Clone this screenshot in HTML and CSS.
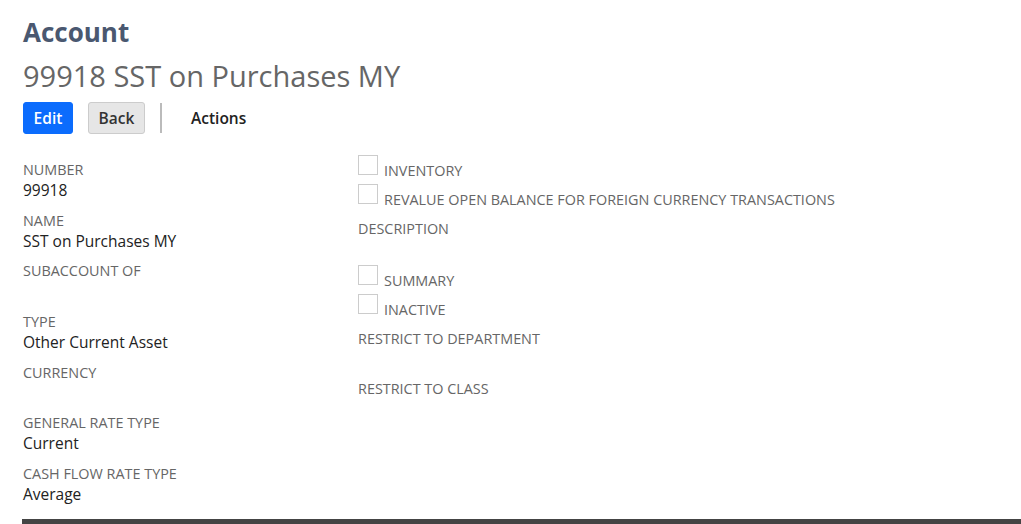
FILE: index.html
```html
<!DOCTYPE html>
<html>
<head>
<meta charset="utf-8">
<title>Account</title>
<link rel="stylesheet" href="styles.css">
</head>
<body>
<div class="page">
  <h1 class="title">Account</h1>
  <h2 class="subtitle">99918 SST on Purchases MY</h2>
  <div class="toolbar">
    <button class="btn btn-primary">Edit</button>
    <button class="btn btn-default">Back</button>
    <span class="sep"></span>
    <button class="btn btn-link">Actions</button>
  </div>
  <div class="fields">
    <div class="col">
      <div class="field"><div class="label">Number</div><div class="value">99918</div></div>
      <div class="field"><div class="label">Name</div><div class="value">SST on Purchases MY</div></div>
      <div class="field"><div class="label">Subaccount of</div><div class="value"></div></div>
      <div class="field"><div class="label">Type</div><div class="value">Other Current Asset</div></div>
      <div class="field"><div class="label">Currency</div><div class="value"></div></div>
      <div class="field"><div class="label">General rate type</div><div class="value">Current</div></div>
      <div class="field"><div class="label">Cash flow rate type</div><div class="value">Average</div></div>
    </div>
    <div class="col col-right">
      <div class="check"><span class="box"></span><span class="label">Inventory</span></div>
      <div class="check"><span class="box"></span><span class="label">Revalue open balance for foreign currency transactions</span></div>
      <div class="field field-wide"><div class="label">Description</div><div class="value"></div></div>
      <div class="check"><span class="box"></span><span class="label">Summary</span></div>
      <div class="check"><span class="box"></span><span class="label">Inactive</span></div>
      <div class="field field-tight"><div class="label">Restrict to department</div><div class="value"></div></div>
      <div class="field"><div class="label">Restrict to class</div><div class="value"></div></div>
    </div>
  </div>
  <div class="footer-bar"></div>
</div>
</body>
</html>
```

FILE: styles.css
```css
html, body {
  margin: 0;
  padding: 0;
  background: #ffffff;
  font-family: "Open Sans", "Noto Sans", sans-serif;
  overflow: hidden;
}

.page {
  padding: 15px 0 0 23px;
}

.title {
  margin: 0;
  font-size: 26px;
  line-height: 34px;
  font-weight: 700;
  color: #4a5870;
}

.subtitle {
  margin: 7px 0 0;
  font-size: 29px;
  line-height: 40px;
  font-weight: 400;
  color: #666666;
}

.toolbar {
  display: flex;
  align-items: center;
  margin-top: 6px;
  height: 32px;
}

.btn {
  font-family: inherit;
  font-size: 15.5px;
  font-weight: 600;
  height: 32px;
  padding: 0 10px;
  border-radius: 3px;
  border: 1px solid transparent;
  box-sizing: border-box;
  cursor: pointer;
}

.btn-primary {
  background: #0b6cfd;
  border-color: #0b6cfd;
  color: #ffffff;
  width: 50px;
  padding: 0;
}

.btn-default {
  margin-left: 15px;
  background: #e6e6e6;
  border-color: #cccccc;
  color: #333333;
  width: 57px;
  padding: 0;
}

.sep {
  width: 2px;
  height: 30px;
  background: #bbbbbb;
  margin-left: 15px;
}

.btn-link {
  background: transparent;
  color: #222222;
  margin-left: 15px;
  padding: 0 13px;
}

.fields {
  display: grid;
  grid-template-columns: 335px 1fr;
  margin-top: 26px;
}

.col-right {
  padding-top: 1px;
}

.field {
  margin-bottom: 10.67px;
}

.field-wide {
  margin-bottom: 12px;
}

.field-tight {
  margin-bottom: 10px;
}

.label {
  font-size: 14.4px;
  line-height: 20px;
  color: #666666;
  text-transform: uppercase;
}

.value {
  font-size: 15.5px;
  line-height: 20px;
  height: 20px;
  color: #222222;
}

.check {
  display: flex;
  align-items: flex-start;
  height: 29px;
}

.box {
  width: 20px;
  height: 20px;
  box-sizing: border-box;
  border: 1px solid #cccccc;
  margin-top: -6px;
  margin-right: 6px;
  background: #ffffff;
}

.footer-bar {
  margin-top: 4px;
  margin-left: -1px;
  height: 20px;
  background: #444444;
}
```
